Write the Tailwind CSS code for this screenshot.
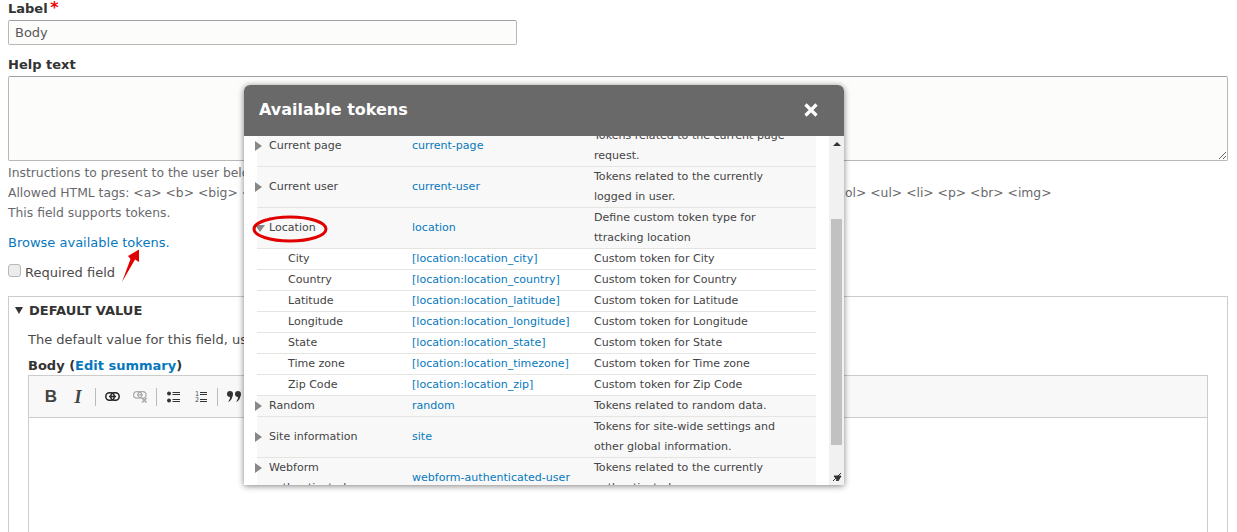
<!DOCTYPE html>
<html lang="en">
<head>
    <meta charset="UTF-8">
    <title>Available tokens</title>
    <script src="https://cdn.jsdelivr.net/npm/@tailwindcss/browser@4"></script>
</head>
<body class="relative h-[532px] overflow-hidden bg-white font-['DejaVu_Sans',sans-serif] text-[13px] leading-5 text-[#333]">
    <!-- form behind the dialog -->
    <div class="-mt-px px-2">
        <label class="block font-bold">Label <span class="-ml-[2px] text-[16px] leading-none text-[#e00]">*</span></label>
        <input type="text" value="Body" class="mt-px block h-[25px] w-[509px] rounded-[2px] border border-[#b8b8b8] border-t-[#a0a0a0] bg-[#fcfcfa] px-[6px] text-[13px] text-[#595959]">

        <label class="mt-[10px] block font-bold">Help text</label>
        <textarea class="mt-px block h-[85px] w-[1220px] rounded-[2px] border border-[#b8b8b8] border-t-[#a0a0a0] bg-[#fcfcfa]"></textarea>

        <div class="mt-[2px] whitespace-nowrap text-[12.35px] text-[#68696d]">
            <div>Instructions to present to the user below this field on the editing form.</div>
            <div>Allowed HTML tags: &lt;a&gt; &lt;b&gt; &lt;big&gt; &lt;code&gt; &lt;del&gt; &lt;em&gt; &lt;i&gt; &lt;ins&gt; &lt;pre&gt; &lt;q&gt; &lt;small&gt; &lt;span&gt; &lt;strong&gt; &lt;sub&gt; &lt;sup&gt; &lt;tt&gt; &lt;ol&gt; &lt;ul&gt; &lt;li&gt; &lt;p&gt; &lt;br&gt; &lt;img&gt;</div>
            <div>This field supports tokens.</div>
        </div>

        <a class="mt-[10px] block text-[#0678be]">Browse available tokens.</a>

        <div class="mt-[10px] flex h-5 items-start gap-[4px]">
            <input type="checkbox" class="mt-px h-[13px] w-[13px] appearance-none rounded-[3px] border border-[#b8b8b8] bg-[#ececec]">
            <span class="text-[#4a4a4a]">Required field</span>
        </div>

        <div class="mt-[13px] h-[300px] w-[1220px] border border-[#ccc]">
            <div class="flex h-[26px] items-center gap-[6px] pl-[6px] pt-[1px] font-bold text-[#333]">
                <span class="h-0 w-0 border-x-[4px] border-t-[7px] border-x-transparent border-t-[#333]"></span>
                DEFAULT VALUE
            </div>
            <div class="px-[19px]">
                <p class="mt-[7px] text-[#4a4a4a]">The default value for this field, used when creating new content.</p>
                <label class="mt-[6px] block font-bold">Body (<a class="text-[#0678be]">Edit summary</a>)</label>
                <div class="-mt-px h-[200px] border border-[#ccc]">
                    <div class="flex h-[42px] items-center border-b border-[#ccc] bg-[#f8f8f8] pl-[10px] text-[#444]">
                        <span class="w-[24px] text-center font-['Liberation_Sans',sans-serif] text-[17px] font-bold">B</span>
                        <span class="ml-[3px] w-[24px] text-center font-['Liberation_Serif',serif] text-[18px] font-bold italic">I</span>
                        <span class="ml-[5px] h-[18px] w-px bg-[#bbb]"></span>
                        <svg class="ml-[9px]" width="15" height="9" viewBox="0 0 15 9" fill="none" stroke="#222" stroke-width="1.500"><rect x="0.800" y="0.800" width="8.500" height="7.400" rx="3.700"/><rect x="5.700" y="0.800" width="8.500" height="7.400" rx="3.700"/><path d="M4 4.500h7"/></svg>
                        <svg class="ml-[13px]" width="14" height="12" viewBox="0 0 14 12" fill="none" stroke="#aaa" stroke-width="1.200"><rect x="0.600" y="0.600" width="8" height="6.500" rx="3.200"/><rect x="5" y="0.600" width="8" height="6.500" rx="3.200"/><path d="M4 3.800h6"/><path d="M9 7l4.500 4.500M13.500 7L9 11.500" stroke-width="1.600"/></svg>
                        <span class="ml-[9px] h-[18px] w-px bg-[#bbb]"></span>
                        <svg class="ml-[10px]" width="13" height="12" viewBox="0 0 13 12"><circle cx="2" cy="2.500" r="2" fill="#333"/><circle cx="2" cy="9.500" r="2" fill="#333"/><path d="M5.500 1.500h7.500M5.500 3.500h7.500M5.500 8.500h7.500M5.500 10.500h7.500" stroke="#333" stroke-width="1"/></svg>
                        <span class="ml-[15px] flex w-[4px] flex-col text-[6.500px] leading-[6px]"><span>1</span><span>2</span></span>
                        <svg class="ml-[1px]" width="7" height="12" viewBox="0 0 7 12"><path d="M0 1.500h7M0 3.500h7M0 8.500h7M0 10.500h7" stroke="#333" stroke-width="1"/></svg>
                        <span class="ml-[10px] h-[18px] w-px bg-[#bbb]"></span>
                        <svg class="ml-[9px]" width="15" height="11" viewBox="0 0 15 11" fill="#333"><circle cx="3" cy="3" r="3"/><path d="M5.600 3.500C5.600 7 4 10 1 11 3 8.500 3 7 3 5z"/><circle cx="11" cy="3" r="3"/><path d="M13.600 3.500C13.600 7 12 10 9 11 11 8.500 11 7 11 5z"/></svg>
                    </div>
                </div>
            </div>
        </div>
    </div>

    <!-- dialog -->
    <div class="absolute left-[244px] top-[85px] flex h-[400px] w-[600px] flex-col overflow-hidden rounded-t-[6px] bg-white shadow-[0_1px_6px_rgba(0,0,0,0.5)]">
        <div class="flex h-[51px] shrink-0 items-center justify-between bg-[#696969] pb-[2px] pl-[15px] pr-[26px] text-white">
            <h2 class="text-[16px] font-bold">Available tokens</h2>
            <svg width="14" height="14" viewBox="0 0 14 14" stroke="#fff" stroke-width="3.200"><path d="M1.500 1.500l11 11M12.500 1.500l-11 11"/></svg>
        </div>
        <div class="relative flex-1 overflow-hidden">
            <table class="ml-[13px] -mt-[10px] w-[559px] table-fixed border-collapse text-[11.05px] leading-5 text-[#444]">
                <colgroup><col class="w-[143px]"><col class="w-[182px]"><col></colgroup>
                <tbody>
                    <tr class="border-b border-[#e6e4df] bg-[#f8f8f8]"><td class="relative pl-[12px]"><span class="absolute -left-[2px] top-[15px] h-0 w-0 border-y-[5px] border-l-[7px] border-y-transparent border-l-[#888]"></span>Current page</td><td class="pl-[12px] text-[#0678be]">current-page</td><td class="pl-[12px]">Tokens related to the current page<br>request.</td></tr>
                    <tr class="border-b border-[#e6e4df] bg-[#f8f8f8]"><td class="relative pl-[12px]"><span class="absolute -left-[2px] top-[15px] h-0 w-0 border-y-[5px] border-l-[7px] border-y-transparent border-l-[#888]"></span>Current user</td><td class="pl-[12px] text-[#0678be]">current-user</td><td class="pl-[12px]">Tokens related to the currently<br>logged in user.</td></tr>
                    <tr class="border-b border-[#e6e4df] bg-[#f8f8f8]"><td class="relative pl-[12px]"><span class="absolute -left-[2px] top-[17px] h-0 w-0 border-x-[5px] border-t-[7px] border-x-transparent border-t-[#888]"></span>Location</td><td class="pl-[12px] text-[#0678be]">location</td><td class="pl-[12px]">Define custom token type for<br>ttracking location</td></tr>
                    <tr class="border-b border-[#e6e4df]"><td class="pl-[31px]">City</td><td class="pl-[12px] text-[#0678be]">[location:location_city]</td><td class="pl-[12px]">Custom token for City</td></tr>
                    <tr class="border-b border-[#e6e4df]"><td class="pl-[31px]">Country</td><td class="pl-[12px] text-[#0678be]">[location:location_country]</td><td class="pl-[12px]">Custom token for Country</td></tr>
                    <tr class="border-b border-[#e6e4df]"><td class="pl-[31px]">Latitude</td><td class="pl-[12px] text-[#0678be]">[location:location_latitude]</td><td class="pl-[12px]">Custom token for Latitude</td></tr>
                    <tr class="border-b border-[#e6e4df]"><td class="pl-[31px]">Longitude</td><td class="pl-[12px] text-[#0678be]">[location:location_longitude]</td><td class="pl-[12px]">Custom token for Longitude</td></tr>
                    <tr class="border-b border-[#e6e4df]"><td class="pl-[31px]">State</td><td class="pl-[12px] text-[#0678be]">[location:location_state]</td><td class="pl-[12px]">Custom token for State</td></tr>
                    <tr class="border-b border-[#e6e4df]"><td class="pl-[31px]">Time zone</td><td class="pl-[12px] text-[#0678be]">[location:location_timezone]</td><td class="pl-[12px]">Custom token for Time zone</td></tr>
                    <tr class="border-b border-[#e6e4df]"><td class="pl-[31px]">Zip Code</td><td class="pl-[12px] text-[#0678be]">[location:location_zip]</td><td class="pl-[12px]">Custom token for Zip Code</td></tr>
                    <tr class="border-b border-[#e6e4df] bg-[#f8f8f8]"><td class="relative pl-[12px]"><span class="absolute -left-[2px] top-[5px] h-0 w-0 border-y-[5px] border-l-[7px] border-y-transparent border-l-[#888]"></span>Random</td><td class="pl-[12px] text-[#0678be]">random</td><td class="pl-[12px]">Tokens related to random data.</td></tr>
                    <tr class="border-b border-[#e6e4df] bg-[#f8f8f8]"><td class="relative pl-[12px]"><span class="absolute -left-[2px] top-[15px] h-0 w-0 border-y-[5px] border-l-[7px] border-y-transparent border-l-[#888]"></span>Site information</td><td class="pl-[12px] text-[#0678be]">site</td><td class="pl-[12px]">Tokens for site-wide settings and<br>other global information.</td></tr>
                    <tr class="bg-[#f8f8f8]"><td class="relative pl-[12px]"><span class="absolute -left-[2px] top-[5px] h-0 w-0 border-y-[5px] border-l-[7px] border-y-transparent border-l-[#888]"></span>Webform<br>authenticated user</td><td class="pl-[12px] text-[#0678be]">webform-authenticated-user</td><td class="pl-[12px]">Tokens related to the currently<br>authenticated user.</td></tr>
                </tbody>
            </table>
            <!-- scrollbar -->
            <div class="absolute right-0 top-0 h-full w-[15px] bg-[#f1f1f1]">
                <span class="absolute left-[4px] top-[6px] h-0 w-0 border-x-[4px] border-b-[4px] border-x-transparent border-b-[#333]"></span>
                <div class="absolute left-[2px] top-[83px] h-[226px] w-[11px] bg-[#c1c1c1]"></div>
                <svg class="absolute bottom-[3px] left-[4px]" width="9" height="9" viewBox="0 0 9 9" stroke="#333" stroke-width="1"><path d="M0 8l8-8M3 8l5-5"/><path d="M1 3l4 5 3-5z" fill="#333"/></svg>
            </div>
        </div>
    </div>

    <!-- red annotations drawn on the screenshot -->
    <svg class="pointer-events-none absolute left-0 top-0" width="1237" height="532" fill="none">
        <ellipse cx="290" cy="229" rx="36" ry="12" stroke="#e00000" stroke-width="3"/>
        <path d="M122 282L130.500 259 128 256 139 249.500 139 262 135 259.500Z" fill="#e00000"/>
    </svg>
</body>
</html>
